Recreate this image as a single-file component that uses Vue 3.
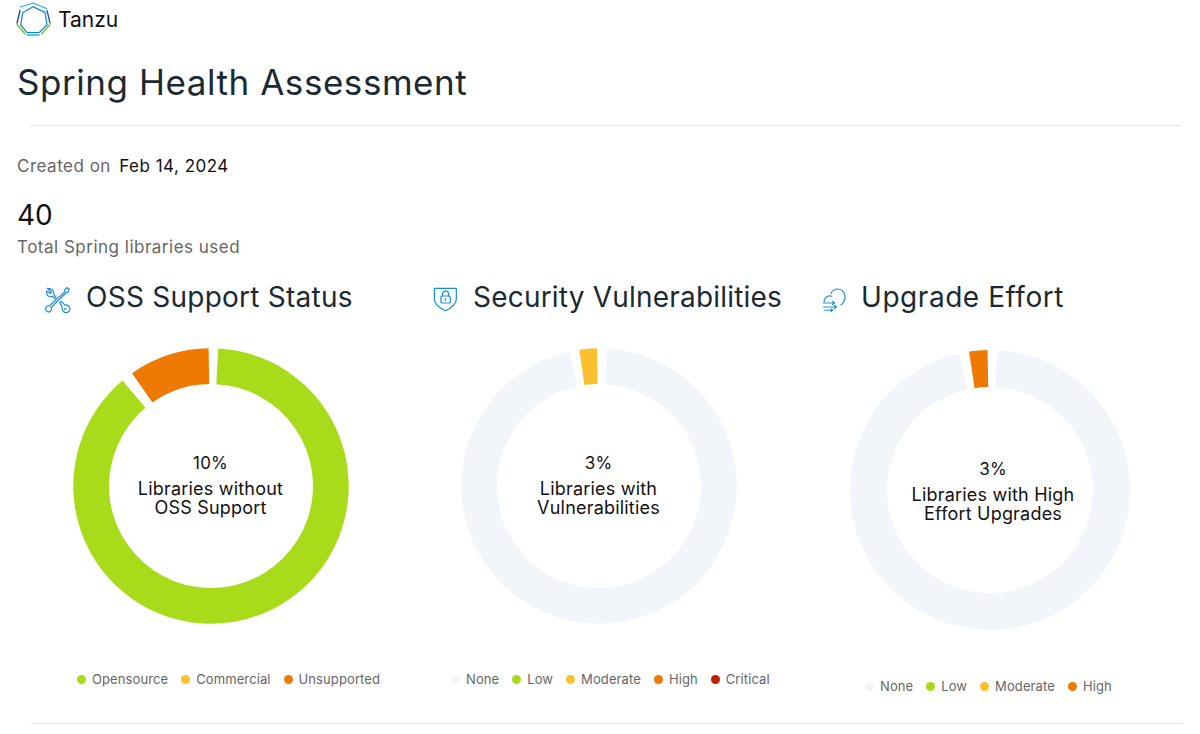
<script setup>
const GREEN = '#a8dc1b'
const YELLOW = '#fbc02d'
const ORANGE = '#ee7a04'
const RED = '#c21d0b'
const EMPTY = '#f2f6fa'
const NONE = '#f4f5f6'

const arc = (cx, cy, r, r2, from, to) => {
  const pt = (rad, deg) => {
    const a = (deg * Math.PI) / 180
    return `${(cx + rad * Math.sin(a)).toFixed(2)} ${(cy - rad * Math.cos(a)).toFixed(2)}`
  }
  const big = to - from > 180 ? 1 : 0
  return `M${pt(r, from)}A${r} ${r} 0 ${big} 1 ${pt(r, to)}L${pt(r2, to)}A${r2} ${r2} 0 ${big} 0 ${pt(r2, from)}Z`
}

const charts = [
  {
    id: 'oss',
    title: 'OSS Support Status',
    icon: 'tools',
    outer: 137.7,
    inner: 102,
    segments: [
      { color: GREEN, from: 3, to: 320 },
      { color: ORANGE, from: 325, to: 359 },
    ],
    pct: '10%',
    lines: ['Libraries without', 'OSS Support'],
    legend: [
      { label: 'Opensource', color: GREEN },
      { label: 'Commercial', color: YELLOW },
      { label: 'Unsupported', color: ORANGE },
    ],
  },
  {
    id: 'sec',
    title: 'Security Vulnerabilities',
    icon: 'shield',
    outer: 137.7,
    inner: 102,
    segments: [
      { color: EMPTY, from: 3.4, to: 347.6 },
      { color: YELLOW, from: 351.8, to: 359.2 },
    ],
    pct: '3%',
    lines: ['Libraries with', 'Vulnerabilities'],
    legend: [
      { label: 'None', color: NONE },
      { label: 'Low', color: GREEN },
      { label: 'Moderate', color: YELLOW },
      { label: 'High', color: ORANGE },
      { label: 'Critical', color: RED },
    ],
  },
  {
    id: 'upg',
    title: 'Upgrade Effort',
    icon: 'cloud',
    outer: 140,
    inner: 103,
    segments: [
      { color: EMPTY, from: 3, to: 347.3 },
      { color: ORANGE, from: 351.4, to: 359 },
    ],
    pct: '3%',
    lines: ['Libraries with High', 'Effort Upgrades'],
    legend: [
      { label: 'None', color: NONE },
      { label: 'Low', color: GREEN },
      { label: 'Moderate', color: YELLOW },
      { label: 'High', color: ORANGE },
    ],
  },
]
</script>

<template>
  <div class="page">
    <header class="brand">
      <svg class="logo" viewBox="0 0 36 36" width="36" height="36" fill="none" stroke-linecap="round">
        <path d="M18 5.700 30 11.700 32 24 24 31.700H12L5.700 24 7.700 11.700Z" stroke="#1a87d0" stroke-width="1.300" stroke-linejoin="round" />
        <path d="M5.500 6 18 2 31.500 7.500" stroke="#1fb0dc" stroke-width="1.300" stroke-linejoin="round" />
        <path d="M32 9.500 35 22" stroke="#1c55a8" stroke-width="1.300" />
        <path d="M5 9.500 2 22" stroke="#173f94" stroke-width="1.300" />
        <path d="M35 23.500 26.500 33" stroke="#78bf2a" stroke-width="1.300" />
        <path d="M2 23.500 10 33" stroke="#78bf2a" stroke-width="1.300" />
        <path d="M12 34H24" stroke="#1fb8e0" stroke-width="1.500" />
      </svg>
      <span class="brand-name">Tanzu</span>
    </header>

    <h1 class="page-title">Spring Health Assessment</h1>
    <hr class="rule" />

    <p class="created">Created on <span class="created-date">Feb 14, 2024</span></p>
    <div class="total">40</div>
    <div class="total-label">Total Spring libraries used</div>

    <div class="charts">
      <section v-for="chart in charts" :key="chart.id" class="chart" :class="`chart-${chart.id}`">
        <h2 class="chart-title">
          <svg v-if="chart.icon === 'tools'" class="chart-icon" viewBox="0 0 30 30" fill="none" stroke="#1b8fdc" stroke-width="1.300" stroke-linejoin="round" stroke-linecap="round">
            <path d="M3.500 2.500 8 6.500 7 8 3 5.500C2 8.500 3.500 11.500 7 11.500L9 11 11.500 13.500 13 12 10.500 9.500C11.500 6 9 2.500 3.500 2.500Z" />
            <path d="M27 3.500 24.500 1.700 22 4.500 22.500 6 5.500 21.500C4 20.500 1.800 22 1.800 24.500 1.800 27 4.500 28.500 6.500 27.500 8.200 26.500 8.500 24.500 7.500 23L24 7 25.500 7Z" />
            <path d="M17 18 18.500 16.500 22.500 20.500C25 19.800 27.800 21.500 27.800 24.500 27.800 27 25.500 29 23 28.500 20.500 28 18.800 25.500 19.500 23Z" />
            <path d="M21.500 25.500 23.500 23.800" />
          </svg>
          <svg v-else-if="chart.icon === 'shield'" class="chart-icon" viewBox="0 0 30 30" fill="none" stroke="#1b8fdc" stroke-width="1.300" stroke-linejoin="round" stroke-linecap="round">
            <path d="M1.500 2.500H25V14C25 20 20 23.500 13.250 26.500 6.500 23.500 1.500 20 1.500 14Z" />
            <rect x="8.500" y="10.700" width="10" height="7.500" rx="1" />
            <path d="M10.300 10.700V8.500C10.300 4.500 16.700 4.500 16.700 8.500V10.700" />
            <path d="M13.500 13.500V15.300" />
          </svg>
          <svg v-else class="chart-icon" viewBox="0 0 30 30" fill="none" stroke="#1b8fdc" stroke-width="1.300" stroke-linejoin="round" stroke-linecap="round">
            <path d="M3.200 17.500C3 13.500 6.500 9.500 11.500 11" />
            <path d="M10.700 8C12.500 4.500 15 3.200 18.200 3.200 22.500 3.200 25.700 7 25.700 11.500 25.700 15.500 23.800 18.500 21.400 20.300" />
            <path d="M2.900 18.200H14.500M12.500 16.500 14.500 18.200 12.500 19.900" />
            <path d="M2.900 22.500H16.500M14.500 20.800 16.500 22.500 14.500 24.200" />
            <path d="M4 26H12.500M10.800 24.700 12.500 26 10.800 27.300" />
          </svg>
          {{ chart.title }}
        </h2>

        <div class="donut">
          <svg viewBox="0 0 300 300" width="300" height="300">
            <path
              v-for="(seg, i) in chart.segments"
              :key="i"
              :d="arc(150, 150, chart.outer, chart.inner, seg.from, seg.to)"
              :fill="seg.color"
            />
          </svg>
          <div class="donut-label">
            <div class="donut-pct">{{ chart.pct }}</div>
            <div v-for="line in chart.lines" :key="line">{{ line }}</div>
          </div>
        </div>

        <ul class="legend">
          <li v-for="item in chart.legend" :key="item.label" class="legend-item">
            <span class="dot" :style="{ background: item.color }"></span>{{ item.label }}
          </li>
        </ul>
      </section>
    </div>

    <hr class="rule rule-bottom" />
  </div>
</template>

<style scoped>
.page {
  width: 1200px;
  height: 734px;
  overflow: hidden;
  background: #fff;
  font-family: Inter, "Liberation Sans", sans-serif;
  color: #1b2a32;
}

.brand {
  display: flex;
  align-items: center;
  gap: 7px;
  height: 38px;
  padding-left: 15px;
}

.brand-name {
  font-size: 21px;
  color: #111;
}

.page-title {
  margin: 0;
  padding: 5px 0 0 17px;
  height: 82px;
  box-sizing: border-box;
  font-size: 35px;
  letter-spacing: 0.55px;
  line-height: 78px;
  font-weight: 400;
}

.rule {
  margin: 5px 20px 0 30px;
  border: 0;
  border-top: 1px solid #e2e4e6;
}

.rule-bottom {
  margin: 0 18px 0 31px;
}

.created {
  margin: 28px 0 0 17px;
  font-size: 17px;
  letter-spacing: 0.5px;
  line-height: 24px;
  color: #666;
}

.created-date {
  margin-left: 3px;
  color: #111;
}

.total {
  margin: 20px 0 0 17px;
  font-size: 28px;
  line-height: 34px;
  color: #111;
}

.total-label {
  margin: 3px 0 0 17px;
  font-size: 17px;
  letter-spacing: 0.5px;
  line-height: 24px;
  color: #666;
}

.charts {
  display: grid;
  grid-template-columns: 389px 388px 390px;
  margin: 18px 0 0 30px;
  height: 446px;
}

.chart-title {
  display: flex;
  align-items: center;
  gap: 12px;
  margin: 0;
  height: 40px;
  padding-left: 14px;
  font-size: 28px;
  letter-spacing: 0.2px;
  font-weight: 400;
}

.chart-oss .chart-title {
  gap: 14px;
  letter-spacing: 0.25px;
}

.chart-upg .chart-title {
  letter-spacing: 0.55px;
}

.chart-icon {
  width: 28px;
  height: 28px;
  margin-top: 6px;
  flex: none;
}

.donut {
  position: relative;
  width: 300px;
  height: 300px;
  margin-top: 19px;
}

.chart-oss .donut { margin-left: 30.500px; }
.chart-sec .donut { margin-left: 29.500px; }
.chart-upg .donut { margin-left: 33px; margin-top: 23px; }

.donut-label {
  position: absolute;
  inset: -2px 0 0;
  display: flex;
  flex-direction: column;
  align-items: center;
  justify-content: center;
  font-size: 18px;
  letter-spacing: 0.2px;
  line-height: 19px;
  color: #111;
}

.chart-upg .donut-label {
  inset: 2px 0 0 6px;
}

.donut-pct {
  margin-bottom: 6px;
  font-size: 17px;
}

.legend {
  display: flex;
  gap: 13px;
  margin: 34px 0 0;
  padding: 0;
  list-style: none;
  font-size: 13px;
  letter-spacing: 0.1px;
  line-height: 18px;
  color: #666;
}

.chart-oss .legend { padding-left: 47px; }
.chart-sec .legend { padding-left: 32px; }
.chart-upg .legend { margin-top: 37px; padding-left: 58px; }

.legend-item {
  display: flex;
  align-items: center;
  gap: 6px;
}

.dot {
  width: 9px;
  height: 9px;
  border-radius: 50%;
  flex: none;
}
</style>

<style>
html, body { background: #fff; }
</style>
